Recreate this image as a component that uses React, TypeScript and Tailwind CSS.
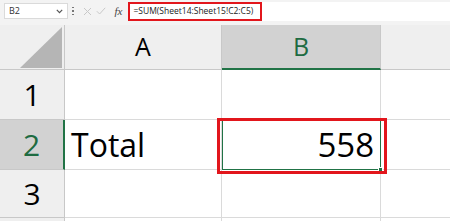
import React from "react";

const hdr = { fontFamily: '"Open Sans", "Noto Sans", sans-serif' };
const cell = { fontFamily: '"Open Sans", "Noto Sans", sans-serif' };

export default function App() {
  return (
    <div className="w-[450px] h-[221px] bg-[#e6e6e6] overflow-hidden flex flex-col">
      {/* formula bar */}
      <div className="h-[25px] bg-[#f3f3f3] flex items-start pt-[3px] shrink-0">
        <div
          className="ml-[4px] w-[64px] h-[16px] bg-white border border-[#dadada] flex items-center justify-between px-[4px] text-[9px] text-[#333]"
          style={{ fontFamily: '"Open Sans", sans-serif' }}
        >
          <span>B2</span>
          <svg width="7" height="5" viewBox="0 0 7 5">
            <path d="M0.8 0.8 L3.5 3.6 L6.2 0.8" stroke="#555" strokeWidth="1.2" fill="none" />
          </svg>
        </div>
        <div className="ml-[4px] h-[16px] flex flex-col justify-center gap-[2px]">
          <div className="w-[1.5px] h-[1.5px] bg-[#777]" />
          <div className="w-[1.5px] h-[1.5px] bg-[#777]" />
          <div className="w-[1.5px] h-[1.5px] bg-[#777]" />
        </div>
        <div className="ml-[9px] h-[16px] flex items-center gap-[4px]">
          <svg width="9" height="9" viewBox="0 0 9 9">
            <path d="M1 1 L8 8 M8 1 L1 8" stroke="#c8c8c8" strokeWidth="1" />
          </svg>
          <svg width="10" height="8" viewBox="0 0 10 8">
            <path d="M0.8 4.2 L3.6 7 L9.2 0.8" stroke="#c8c8c8" strokeWidth="1" fill="none" />
          </svg>
          <span
            className="ml-[5px] text-[11px] italic text-[#444] leading-none"
            style={{ fontFamily: '"Liberation Serif", serif' }}
          >
            fx
          </span>
        </div>
        <div className="ml-[6px] flex-1 h-[19px] bg-white -mt-[1px] flex items-center">
          <div
            className="h-[19px] w-[134px] border-[2.5px] border-[#e2161c] flex items-center pl-[3px] text-[8.5px] text-[#222]"
            style={{ fontFamily: '"Open Sans", sans-serif' }}
          >
            =SUM(Sheet14:Sheet15!C2:C5)
          </div>
        </div>
      </div>

      {/* grid */}
      <div className="relative grid grid-cols-[65px_157px_159px_1fr] grid-rows-[45px_50px_50px_48px_1fr] flex-1 bg-white">
        {/* header row */}
        <div className="bg-[#efefef] border-r border-b border-[#c8c8c8] flex items-end justify-end pr-[2px] pb-[1px]">
          <svg width="42" height="41" viewBox="0 0 42 41">
            <path d="M0 41 L42 41 L42 0 Z" fill="#b5b5b5" />
          </svg>
        </div>
        <div
          className="bg-[#efefef] border-r border-b border-[#c8c8c8] flex items-center justify-center text-[25px] text-black"
          style={hdr}
        >
          A
        </div>
        <div
          className="bg-[#d2d2d2] border-r border-[#c8c8c8] border-b-2 border-b-[#217346] flex items-center justify-center text-[25px] text-[#1e6b41]"
          style={hdr}
        >
          B
        </div>
        <div className="bg-[#efefef] border-b border-[#c8c8c8]" />

        {/* row 1 */}
        <div
          className="bg-[#efefef] border-r border-b border-[#c8c8c8] flex items-center justify-center text-[30px] text-black"
          style={hdr}
        >
          1
        </div>
        <div className="border-r border-b border-[#dadada]" />
        <div className="border-r border-b border-[#dadada]" />
        <div className="border-b border-[#dadada]" />

        {/* row 2 */}
        <div
          className="bg-[#d2d2d2] border-r-2 border-r-[#217346] border-b border-[#c8c8c8] flex items-center justify-center text-[30px] text-[#1e6b41]"
          style={hdr}
        >
          2
        </div>
        <div
          className="border-r border-b border-[#dadada] flex items-center pl-[6px] text-[32px] text-black"
          style={cell}
        >
          Total
        </div>
        <div
          className="relative border-[1.5px] border-[#217346] flex items-center justify-end pr-[6px] text-[33px] text-black"
          style={cell}
        >
          558
          <div className="absolute -right-[3px] -bottom-[3px] w-[5px] h-[5px] bg-[#217346] border border-white" />
        </div>
        <div className="border-b border-[#dadada]" />

        {/* row 3 */}
        <div
          className="bg-[#efefef] border-r border-b border-[#c8c8c8] flex items-center justify-center text-[30px] text-black"
          style={hdr}
        >
          3
        </div>
        <div className="border-r border-b border-[#dadada]" />
        <div className="border-r border-b border-[#dadada]" />
        <div className="border-b border-[#dadada]" />

        {/* bottom partial row */}
        <div className="bg-[#efefef] border-r border-[#c8c8c8]" />
        <div className="border-r border-[#dadada]" />
        <div className="border-r border-[#dadada]" />
        <div />

        {/* red annotation around B2 */}
        <div className="absolute left-[217px] top-[93px] w-[170px] h-[56px] border-[3px] border-[#e2161c] pointer-events-none" />
      </div>
    </div>
  );
}
